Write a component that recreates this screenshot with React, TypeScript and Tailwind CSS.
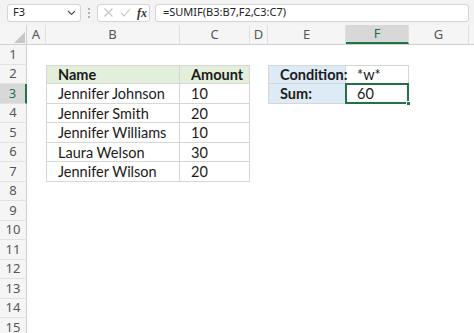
import React from "react";

const cellFont = { fontFamily: "Lato, 'Liberation Sans', sans-serif" };
const uiFont = { fontFamily: "'Noto Sans', 'Open Sans', sans-serif" };

const widths = ["w-[19px]", "w-[134px]", "w-[70px]", "w-[18px]", "w-[78px]", "w-[63px]", "w-[60px]"];
const letters = ["A", "B", "C", "D", "E", "F", "G"];

type CellSpec = { text?: string; cls?: string; bold?: boolean; selected?: boolean };

const B = "border-[#d6d6d6]";

function rowCells(r: number): Record<number, CellSpec> {
  const m: Record<number, CellSpec> = {};
  const data: [string, string][] = [
    ["Jennifer Johnson", "10"],
    ["Jennifer Smith", "20"],
    ["Jennifer Williams", "10"],
    ["Laura Welson", "30"],
    ["Jennifer Wilson", "20"],
  ];
  if (r === 2) {
    m[1] = { text: "Name", bold: true, cls: `bg-[#e2efda] border-l border-t border-r border-b ${B}` };
    m[2] = { text: "Amount", bold: true, cls: `bg-[#e2efda] border-t border-r border-b ${B}` };
    m[4] = { text: "Condition:", bold: true, cls: `bg-[#ddebf7] border-l border-t border-r border-b ${B}` };
    m[5] = { text: "*w*", cls: `border-t border-r border-b ${B}` };
  }
  if (r >= 3 && r <= 7) {
    const [n, a] = data[r - 3];
    m[1] = { text: n, cls: `border-l border-r border-b ${B}` };
    m[2] = { text: a, cls: `border-r border-b ${B}` };
  }
  if (r === 3) {
    m[4] = { text: "Sum:", bold: true, cls: `bg-[#ddebf7] border-l border-r border-b ${B}` };
    m[5] = { text: "60", selected: true, cls: `border-r border-b ${B}` };
  }
  return m;
}

export default function App() {
  const rows = Array.from({ length: 15 }, (_, i) => i + 1);
  return (
    <div className="w-[474px] h-[333px] overflow-hidden bg-white flex flex-col">
      {/* formula bar */}
      <div className="h-[25px] bg-[#f3f3f3] flex items-center pl-[7px] gap-0 shrink-0" style={uiFont}>
        <div className="w-[74px] h-[18px] bg-white border border-[#d4d4d4] rounded-[3px] flex items-center justify-between pl-[5px] pr-[4px]">
          <span className="text-[11px] text-[#222]">F3</span>
          <svg width="9" height="6" viewBox="0 0 9 6"><path d="M1 1 L4.5 4.5 L8 1" fill="none" stroke="#555" strokeWidth="1.2" /></svg>
        </div>
        <div className="w-[16px] flex flex-col items-center gap-[2px]">
          <span className="w-[2px] h-[2px] bg-[#b0b0b0]" />
          <span className="w-[2px] h-[2px] bg-[#b0b0b0]" />
          <span className="w-[2px] h-[2px] bg-[#b0b0b0]" />
        </div>
        <div className="w-[53px] h-[18px] bg-white border border-[#d4d4d4] rounded-[3px] flex items-center pl-[5px] gap-[6px]">
          <svg width="11" height="11" viewBox="0 0 11 11"><path d="M1.5 1.5 L9.5 9.5 M9.5 1.5 L1.5 9.5" stroke="#c4c4c4" strokeWidth="1.1" /></svg>
          <svg width="11" height="11" viewBox="0 0 11 11"><path d="M1 6 L4 9 L10 2" fill="none" stroke="#c4c4c4" strokeWidth="1.1" /></svg>
          <span className="text-[12px] italic font-bold text-[#333] leading-none" style={{ fontFamily: "'Liberation Serif', serif" }}>fx</span>
        </div>
        <div className="ml-[5px] w-[314px] h-[18px] bg-white border border-[#d4d4d4] rounded-[3px] flex items-center pl-[7px]">
          <span className="text-[11px] text-[#222]">=SUMIF(B3:B7,F2,C3:C7)</span>
        </div>
      </div>
      {/* column header */}
      <div className="h-[20px] flex shrink-0 bg-[#f5f5f5] border-b border-[#d0d0d0]" style={uiFont}>
        <div className="w-[27px] relative border-r border-[#d0d0d0]">
          <svg className="absolute right-[1px] bottom-[1px]" width="11" height="11" viewBox="0 0 11 11"><path d="M11 0 L11 11 L0 11 Z" fill="#c6c6c6" /></svg>
        </div>
        {letters.map((l, i) => (
          <div
            key={l}
            className={`${widths[i]} flex items-center justify-center text-[13px] border-r border-[#e0e0e0] ${l === "F" ? "bg-[#d8d8d8] text-[#217346] border-b-2 border-b-[#217346]" : "text-[#555]"}`}
          >
            {l}
          </div>
        ))}
        <div className="flex-1" />
      </div>
      {/* rows */}
      {rows.map((r) => {
        const cells = rowCells(r);
        return (
          <div key={r} className="h-[19.5px] flex shrink-0">
            <div
              className={`w-[27px] shrink-0 flex items-center justify-center text-[13px] border-b border-[#e2e2e2] border-r ${r === 3 ? "bg-[#d8d8d8] text-[#217346] border-r-2 border-r-[#217346]" : "bg-[#f5f5f5] text-[#555] border-r-[#d0d0d0]"}`}
              style={uiFont}
            >
              {r}
            </div>
            {widths.map((w, i) => {
              const c = cells[i];
              return (
                <div
                  key={i}
                  className={`${w} shrink-0 relative flex items-center pl-[11px] pt-[2px] text-[14.5px] text-[#1a1a1a] whitespace-nowrap ${c?.cls ?? ""} ${c?.bold ? "font-bold" : ""}`}
                  style={cellFont}
                >
                  {c?.text}
                  {c?.selected && (
                    <>
                      <div className="absolute -left-[1px] -top-[1px] -right-[1px] -bottom-[1px] border-2 border-[#217346]" />
                      <div className="absolute -right-[3px] -bottom-[3px] w-[5px] h-[5px] bg-[#217346] border border-white" />
                    </>
                  )}
                </div>
              );
            })}
            <div className="flex-1" />
          </div>
        );
      })}
    </div>
  );
}
